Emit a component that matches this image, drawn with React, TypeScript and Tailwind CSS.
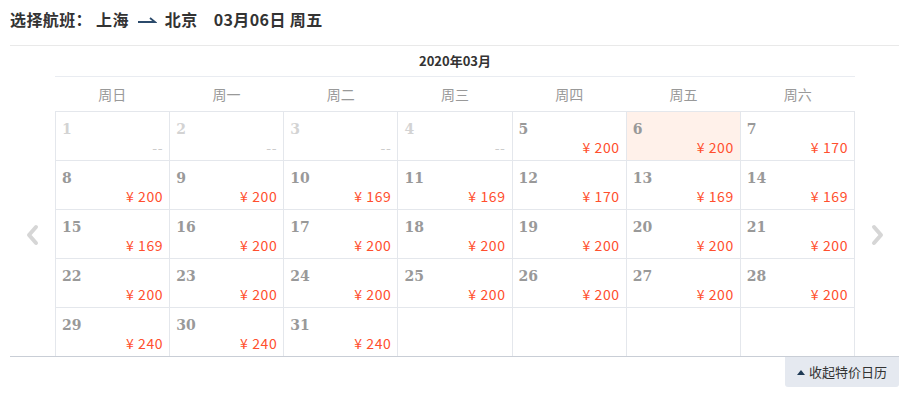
const weekdays = ["周日", "周一", "周二", "周三", "周四", "周五", "周六"]

type Day = { d: number; price?: number; disabled?: boolean; selected?: boolean } | null

const prices: Record<number, number> = {
    5: 200, 6: 200, 7: 170, 8: 200, 9: 200, 10: 169, 11: 169, 12: 170, 13: 169, 14: 169,
    15: 169, 16: 200, 17: 200, 18: 200, 19: 200, 20: 200, 21: 200, 22: 200, 23: 200, 24: 200,
    25: 200, 26: 200, 27: 200, 28: 200, 29: 240, 30: 240, 31: 240,
}

const days: Day[] = []
for (let i = 1; i <= 31; i++) {
    days.push({ d: i, price: prices[i], disabled: i < 5, selected: i === 6 })
}
while (days.length < 35) days.push(null)

const Chevron = ({ dir }: { dir: "left" | "right" }) => (
    <svg width="14" height="22" viewBox="0 0 14 22">
        <path
            d={dir === "left" ? "M11 3 L4 11 L11 19" : "M3 3 L10 11 L3 19"}
            stroke="#d6d6d6"
            strokeWidth="4"
            fill="none"
            strokeLinecap="round"
            strokeLinejoin="round"
        />
    </svg>
)

export default function App() {
    return (
        <div className="w-[909px] h-[394px] bg-white px-[10px] pt-[8px]" style={{ fontFamily: '"Noto Sans CJK SC", "Noto Sans", sans-serif' }}>
            <div className="flex items-center h-[22px] text-[16px] font-bold text-[#333] tracking-[0.4px]">
                <span>选择航班：</span>
                <span className="ml-[4px]">上海</span>
                <svg width="20" height="10" viewBox="0 0 20 10" className="mx-[8px] mt-[2px]">
                    <path d="M1 7 H18 L13 3" stroke="#2b4a6b" strokeWidth="1.8" fill="none" />
                </svg>
                <span>北京</span>
                <span className="ml-[16px]">03月06日 周五</span>
            </div>
            <div className="mt-[15px] border-t border-[#e9e9e9]" />
            <div className="flex">
                <div className="w-[45px] flex items-center justify-center pt-[66px] pr-[2px]">
                    <Chevron dir="left" />
                </div>
                <div className="w-[800px]">
                    <div className="h-[31px] flex items-center justify-center text-[13px] font-bold text-[#333] border-b border-[#e9ecf1]">
                        2020年03月
                    </div>
                    <div className="grid grid-cols-7 h-[34px] items-center text-[14px] text-[#999]">
                        {weekdays.map((w) => (
                            <div key={w} className="text-center">{w}</div>
                        ))}
                    </div>
                    <div className="grid grid-cols-7 border-l border-t border-[#e4e7ec]">
                        {days.map((day, i) => (
                            <div
                                key={i}
                                className={`h-[49px] border-r border-b border-[#e4e7ec] px-[6px] flex flex-col justify-between ${day?.selected ? "bg-[#fff1ea]" : "bg-white"}`}
                            >
                                {day && (
                                    <>
                                        <span
                                            className={`pt-[9px] text-[14px] font-bold leading-[16px] ${day.disabled ? "text-[#d3d3d3]" : "text-[#999]"}`}
                                            style={{ fontFamily: '"DejaVu Serif", serif' }}
                                        >
                                            {day.d}
                                        </span>
                                        <span className={`pb-[4px] text-right text-[14px] leading-[18px] tracking-[0.6px] ${day.disabled ? "text-[#ccc]" : "text-[#ff4f2e]"}`}>
                                            {day.price ? `¥ ${day.price}` : "--"}
                                        </span>
                                    </>
                                )}
                            </div>
                        ))}
                    </div>
                </div>
                <div className="flex-1 flex items-center justify-center pt-[66px] pl-[2px]">
                    <Chevron dir="right" />
                </div>
            </div>
            <div className="border-t border-[#c9ced6] -mt-px relative flex justify-end">
                <button className="h-[30px] w-[114px] bg-[#e5e9f0] rounded-b-[3px] flex items-center justify-center gap-[4px] text-[13px] text-[#333]">
                    <svg width="8" height="5" viewBox="0 0 8 5">
                        <path d="M0 5 L4 0 L8 5 Z" fill="#1f3a55" />
                    </svg>
                    收起特价日历
                </button>
            </div>
        </div>
    )
}
